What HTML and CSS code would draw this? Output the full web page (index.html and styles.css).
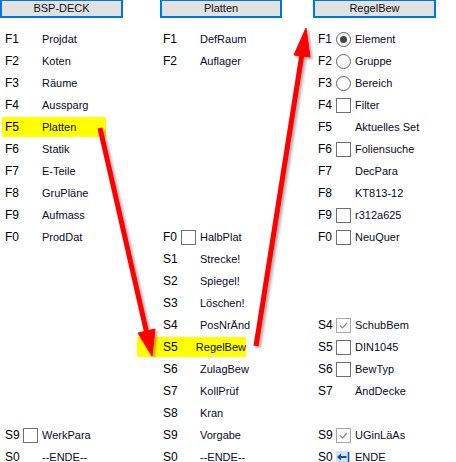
FILE: index.html
```html
<!DOCTYPE html>
<html lang="de">
<head>
    <meta charset="UTF-8">
    <title>Menü BSP-DECK</title>
    <link rel="stylesheet" href="styles.css">
</head>
<body>
    <div class="menus">
        <div class="col one">
            <div class="head">BSP-DECK</div>
            <div class="row"><span class="key">F1</span><span class="slot"></span><span class="label">Projdat</span></div>
            <div class="row"><span class="key">F2</span><span class="slot"></span><span class="label">Koten</span></div>
            <div class="row"><span class="key">F3</span><span class="slot"></span><span class="label">Räume</span></div>
            <div class="row"><span class="key">F4</span><span class="slot"></span><span class="label">Aussparg</span></div>
            <div class="row hl"><span class="key">F5</span><span class="slot"></span><span class="label">Platten</span></div>
            <div class="row"><span class="key">F6</span><span class="slot"></span><span class="label">Statik</span></div>
            <div class="row"><span class="key">F7</span><span class="slot"></span><span class="label">E-Teile</span></div>
            <div class="row"><span class="key">F8</span><span class="slot"></span><span class="label">GruPläne</span></div>
            <div class="row"><span class="key">F9</span><span class="slot"></span><span class="label">Aufmass</span></div>
            <div class="row"><span class="key">F0</span><span class="slot"></span><span class="label">ProdDat</span></div>
            <div class="row"></div>
            <div class="row"></div>
            <div class="row"></div>
            <div class="row"></div>
            <div class="row"></div>
            <div class="row"></div>
            <div class="row"></div>
            <div class="row"></div>
            <div class="row"><span class="key">S9</span><span class="slot"><span class="check"></span></span><span class="label">WerkPara</span></div>
            <div class="row"><span class="key">S0</span><span class="slot"></span><span class="label">--ENDE--</span></div>
        </div>

        <div class="col two">
            <div class="head">Platten</div>
            <div class="row"><span class="key">F1</span><span class="slot"></span><span class="label">DefRaum</span></div>
            <div class="row"><span class="key">F2</span><span class="slot"></span><span class="label">Auflager</span></div>
            <div class="row"></div>
            <div class="row"></div>
            <div class="row"></div>
            <div class="row"></div>
            <div class="row"></div>
            <div class="row"></div>
            <div class="row"></div>
            <div class="row"><span class="key">F0</span><span class="slot"><span class="check"></span></span><span class="label">HalbPlat</span></div>
            <div class="row"><span class="key">S1</span><span class="slot"></span><span class="label">Strecke!</span></div>
            <div class="row"><span class="key">S2</span><span class="slot"></span><span class="label">Spiegel!</span></div>
            <div class="row"><span class="key">S3</span><span class="slot"></span><span class="label">Löschen!</span></div>
            <div class="row"><span class="key">S4</span><span class="slot"></span><span class="label">PosNrÄnd</span></div>
            <div class="row hl"><span class="key">S5</span><span class="slot"></span><span class="label">RegelBew</span></div>
            <div class="row"><span class="key">S6</span><span class="slot"></span><span class="label">ZulagBew</span></div>
            <div class="row"><span class="key">S7</span><span class="slot"></span><span class="label">KollPrüf</span></div>
            <div class="row"><span class="key">S8</span><span class="slot"></span><span class="label">Kran</span></div>
            <div class="row"><span class="key">S9</span><span class="slot"></span><span class="label">Vorgabe</span></div>
            <div class="row"><span class="key">S0</span><span class="slot"></span><span class="label">--ENDE--</span></div>
        </div>

        <div class="col three">
            <div class="head">RegelBew</div>
            <div class="row"><span class="key">F1</span><span class="slot"><span class="radio on"></span></span><span class="label">Element</span></div>
            <div class="row"><span class="key">F2</span><span class="slot"><span class="radio"></span></span><span class="label">Gruppe</span></div>
            <div class="row"><span class="key">F3</span><span class="slot"><span class="radio"></span></span><span class="label">Bereich</span></div>
            <div class="row"><span class="key">F4</span><span class="slot"><span class="check"></span></span><span class="label">Filter</span></div>
            <div class="row"><span class="key">F5</span><span class="slot"></span><span class="label">Aktuelles Set</span></div>
            <div class="row"><span class="key">F6</span><span class="slot"><span class="check"></span></span><span class="label">Foliensuche</span></div>
            <div class="row"><span class="key">F7</span><span class="slot"></span><span class="label">DecPara</span></div>
            <div class="row"><span class="key">F8</span><span class="slot"></span><span class="label">KT813-12</span></div>
            <div class="row"><span class="key">F9</span><span class="slot"><span class="check"></span></span><span class="label">r312a625</span></div>
            <div class="row"><span class="key">F0</span><span class="slot"><span class="check"></span></span><span class="label">NeuQuer</span></div>
            <div class="row"></div>
            <div class="row"></div>
            <div class="row"></div>
            <div class="row"><span class="key">S4</span><span class="slot"><span class="check on"><svg viewBox="0 0 13 13"><path d="M3 6.5 L5.5 9 L10 4" /></svg></span></span><span class="label">SchubBem</span></div>
            <div class="row"><span class="key">S5</span><span class="slot"><span class="check"></span></span><span class="label">DIN1045</span></div>
            <div class="row"><span class="key">S6</span><span class="slot"><span class="check"></span></span><span class="label">BewTyp</span></div>
            <div class="row"><span class="key">S7</span><span class="slot"></span><span class="label">ÄndDecke</span></div>
            <div class="row"></div>
            <div class="row"><span class="key">S9</span><span class="slot"><span class="check on"><svg viewBox="0 0 13 13"><path d="M3 6.5 L5.5 9 L10 4" /></svg></span></span><span class="label">UGinLäAs</span></div>
            <div class="row"><span class="key">S0</span><span class="slot"><svg class="exit" viewBox="0 0 14 12"><rect x="0" y="0" width="14" height="12" fill="#cfe3f7"/><path d="M12.5 1 V11" stroke="#1c4f9c" stroke-width="1.5"/><path d="M10.5 6 H3" stroke="#1c4f9c" stroke-width="2"/><path d="M1 6 L5 2.5 V9.5 Z" fill="#1c4f9c"/></svg></span><span class="label">ENDE</span></div>
        </div>
    </div>

    <!-- red arrows drawn over the menus -->
    <svg class="arrows" width="456" height="462" viewBox="0 0 456 462">
        <defs>
            <filter id="shade" x="-20%" y="-20%" width="140%" height="140%">
                <feDropShadow dx="2" dy="2" stdDeviation="1.5" flood-color="#000" flood-opacity="0.35"/>
            </filter>
        </defs>
        <g filter="url(#shade)" fill="#ff0000" stroke="#ff0000">
            <line x1="100" y1="128" x2="147" y2="334" stroke-width="5"/>
            <polygon points="152,356 155,329 138,333" stroke-width="1"/>
            <line x1="256" y1="346" x2="302" y2="54" stroke-width="5"/>
            <polygon points="306,28 310,57 294,55" stroke-width="1"/>
        </g>
    </svg>
</body>
</html>
```

FILE: styles.css
```css
body {
    margin: 0;
    background: #fff;
    font-family: "Liberation Sans", Arial, sans-serif;
    font-size: 11px;
    color: #000;
    overflow: hidden;
}
.menus {
    display: grid;
    grid-template-columns: 158px 155px 1fr;
}
.head {
    box-sizing: border-box;
    width: 123px;
    height: 19px;
    margin-top: -1px;
    margin-bottom: 10px;
    border: 2px solid #0078d7;
    background: #e1e1e1;
    text-align: center;
    line-height: 15px;
    font-size: 11px;
    color: #111;
}
.two .head {
    margin-left: 2px;
    width: 122px;
}
.row {
    display: flex;
    align-items: center;
    height: 22px;
    padding-left: 5px;
}
.key {
    width: 18px;
    font-size: 12px;
}
.slot {
    display: flex;
    align-items: center;
    width: 15px;
    height: 15px;
    margin-right: 4px;
}
.label {
    color: #0a0a2a;
    font-size: 11px;
    white-space: nowrap;
}
.row.hl {
    background: #ffff00;
    height: 20px;
    margin: 1px 0;
}
.one .row.hl {
    margin-left: 2px;
    padding-left: 3px;
    width: 101px;
}
.two .row.hl {
    margin-left: -21px;
    padding-left: 26px;
    width: 83px;
}
.check {
    box-sizing: border-box;
    display: block;
    width: 15px;
    height: 15px;
    border: 1px solid #707070;
    background: #fff;
}
.check.on {
    border-color: #a8a8a8;
}
.check svg {
    display: block;
    width: 13px;
    height: 13px;
    fill: none;
    stroke: #8a8a8a;
    stroke-width: 1.2;
}
.radio {
    box-sizing: border-box;
    display: flex;
    align-items: center;
    justify-content: center;
    width: 15px;
    height: 15px;
    border: 1px solid #606060;
    border-radius: 50%;
    background: #fff;
}
.radio.on::after {
    content: "";
    width: 7px;
    height: 7px;
    border-radius: 50%;
    background: #444;
}
.exit {
    width: 14px;
    height: 12px;
}
.arrows {
    position: absolute;
    left: 0;
    top: 0;
    pointer-events: none;
}
```
